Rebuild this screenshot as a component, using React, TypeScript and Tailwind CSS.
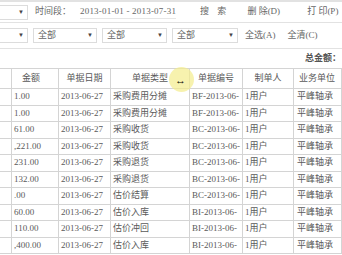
import React from "react";

const rows = [
  ["1.00", "采购费用分摊", "BF-2013-06-"],
  ["1.00", "采购费用分摊", "BF-2013-06-"],
  ["61.00", "采购收货", "BC-2013-06-"],
  [",221.00", "采购收货", "BC-2013-06-"],
  ["231.00", "采购退货", "BC-2013-06-"],
  ["132.00", "采购退货", "BC-2013-06-"],
  [".00", "估价结算", "BC-2013-06-"],
  ["60.00", "估价入库", "BI-2013-06-"],
  ["110.00", "估价冲回", "BI-2013-06-"],
  [",400.00", "估价入库", "BI-2013-06-"],
];

const cols = "grid grid-cols-[12px_47px_52px_79px_53px_51px_1fr]";
const cell = "border-r border-b border-[#d4d4d4] px-[2px] flex items-center overflow-hidden whitespace-nowrap";

function Combo({ label, className }: { label?: string; className: string }) {
  return (
    <div className={`h-[15px] border border-[#dcdcdc] flex items-center justify-between pl-[4px] pr-[3px] ${className}`}>
      <span>{label}</span>
      <span className="text-[6px] text-[#444]">▼</span>
    </div>
  );
}

export default function App() {
  return (
    <div
      className="relative w-[342px] h-[255px] overflow-hidden bg-white text-[9px] text-[#666]"
      style={{ fontFamily: '"Liberation Serif", "Noto Sans CJK SC", serif' }}
    >
      {/* toolbar row 1 */}
      <div className="h-[23px] border-t-2 border-b border-[#e2e2e2] flex items-center">
        <Combo className="w-[30px] -ml-[2px] border-l-0" />
        <span className="ml-[7px]">时间段：</span>
        <span className="ml-[9px] border-b border-[#e6e6e6] tracking-[0.2px]">2013-01-01 - 2013-07-31</span>
        <span className="ml-[24px] tracking-[3px]">搜 索</span>
        <span className="ml-[18px]">删 除(D)</span>
        <span className="ml-[27px]">打 印(P)</span>
      </div>
      {/* toolbar row 2 */}
      <div className="h-[26px] border-b border-[#e2e2e2] flex items-center">
        <Combo className="w-[30px] -ml-[2px] border-l-0" />
        <Combo label="全部" className="w-[64px] ml-[5px]" />
        <Combo label="全部" className="w-[65px] ml-[5px]" />
        <Combo label="全部" className="w-[66px] ml-[5px]" />
        <span className="ml-[7px]">全选(A)</span>
        <span className="ml-[12px]">全清(C)</span>
      </div>
      {/* total */}
      <div className="h-[19px] flex items-center justify-end pr-[1px] font-bold text-[#555]">总金额：</div>
      {/* table */}
      <div className="border-t border-[#d4d4d4] text-[#5a5a5a]">
        <div className={`${cols} h-[20px]`}>
          <div className={cell}></div>
          <div className={`${cell} justify-center pr-[10px]`}>金额</div>
          <div className={`${cell} justify-center`}>单据日期</div>
          <div className={`${cell} justify-center`}>单据类型</div>
          <div className={`${cell} justify-center`}>单据编号</div>
          <div className={`${cell} justify-center`}>制单人</div>
          <div className={`${cell} justify-start pl-[5px]`}>业务单位</div>
        </div>
        {rows.map((r, i) => (
          <div key={i} className={`${cols} h-[16.5px]`}>
            <div className={cell}></div>
            <div className={`${cell} px-0`}>{r[0]}</div>
            <div className={cell}>2013-06-27</div>
            <div className={cell}>{r[1]}</div>
            <div className={cell}>{r[2]}</div>
            <div className={cell}>1用户</div>
            <div className={`${cell} pl-[3px]`}>平峰轴承</div>
          </div>
        ))}
      </div>
      {/* cursor highlight */}
      <div className="absolute left-[169px] top-[67px] w-[25px] h-[25px] rounded-full bg-[#f3ec8c]/70"></div>
      <div className="absolute left-[175px] top-[75px] text-[11px] leading-none text-black font-bold">↔</div>
    </div>
  );
}
